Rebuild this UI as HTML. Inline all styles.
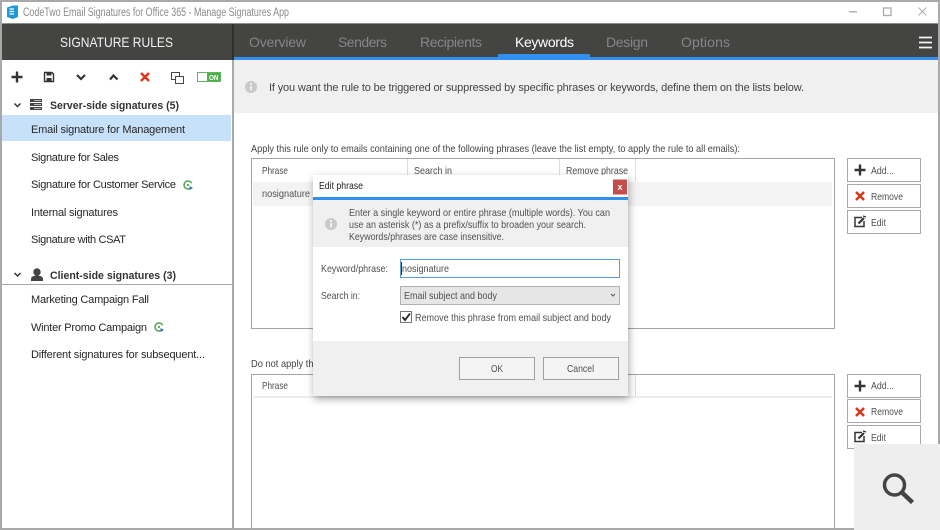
<!DOCTYPE html>
<html><head><meta charset="utf-8"><style>
html,body{margin:0;padding:0;background:#fff;width:940px;height:530px;overflow:hidden}
svg{display:block}
text{font-family:"Liberation Sans",sans-serif;font-size:11px;fill:#3c3c3c}
.s{font-size:10.5px;fill:#505050}
.b{font-weight:bold;fill:#333}
.tab{font-size:14px;fill:#868686}
.li{font-size:11px;fill:#262626}
</style></head><body>
<svg width="940" height="530" viewBox="0 0 940 530" xmlns="http://www.w3.org/2000/svg">
<defs>
<filter id="sh" x="-10%" y="-10%" width="120%" height="125%"><feDropShadow dx="1" dy="3" stdDeviation="4" flood-color="#000" flood-opacity=".35"/></filter>
<g id="add"><path d="M-5.500 0H5.500M0 -5.500V5.500" stroke="#333" stroke-width="2.400" fill="none"/></g>
<g id="x"><path d="M-4 -4L4 4M4 -4L-4 4" stroke="#d9361b" stroke-width="2.500" fill="none"/></g>
<g id="edit"><path d="M2 -4.500H-5V4.500H4V-1" stroke="#333" stroke-width="1.500" fill="none"/><path d="M-1.500 1.500L4 -4" stroke="#333" stroke-width="2.200"/><path d="M3 -6L6 -5" stroke="#333" stroke-width="1.200"/></g>
<g id="sync"><path d="M3.600 -1.800A4 4 0 1 0 1.500 3.700" stroke="#4aa84a" stroke-width="1.500" fill="none"/><circle r="1.100" fill="#4aa84a"/><path d="M1.500 1L5 3L1.500 5Z" fill="#2f6fc0"/></g>
</defs>

<!-- frame -->
<rect width="940" height="530" fill="#a9a9a9"/>
<rect x="2" y="2" width="936" height="526" fill="#fff"/>
<rect x="2" y="23" width="936" height="1" fill="#8d8d8d"/>

<!-- title bar -->
<path d="M7 7.500L13 5.500H18V17L13 19L7 17Z" fill="#1e9ad6"/><path d="M9.500 9H14M9.500 11.500H14M9.500 14H14" stroke="#fff" stroke-width="1.200"/>
<text x="23" y="16" textLength="266" lengthAdjust="spacingAndGlyphs" style="font-size:11.500px;fill:#8a8a8a">CodeTwo Email Signatures for Office 365 - Manage Signatures App</text>
<rect x="849" y="11" width="8" height="1.500" fill="#b0b0b0"/>
<rect x="883.500" y="8" width="7.500" height="7.500" fill="none" stroke="#aaa" stroke-width="1.300"/>
<path d="M918.500 7.500L926.500 15.500M926.500 7.500L918.500 15.500" stroke="#aaa" stroke-width="1" fill="none"/>

<!-- header -->
<rect x="2" y="24" width="936" height="36" fill="#444443"/>
<rect x="232" y="24" width="2" height="36" fill="#2f2f2f"/>
<rect x="234" y="57" width="704" height="3" fill="#3390f0"/>
<rect x="498" y="54" width="92" height="6" fill="#3390f0"/>
<text x="60" y="47" textLength="113" lengthAdjust="spacingAndGlyphs" style="font-size:14px;fill:#f2f2f2">SIGNATURE RULES</text>
<text class="tab" x="249" y="47" textLength="57">Overview</text>
<text class="tab" x="338" y="47" textLength="49">Senders</text>
<text class="tab" x="420" y="47" textLength="62">Recipients</text>
<text class="tab" x="515" y="47" textLength="59" style="fill:#fff">Keywords</text>
<text class="tab" x="606" y="47" textLength="42">Design</text>
<text class="tab" x="681" y="47" textLength="49">Options</text>
<path d="M919 37.500H932M919 42.500H932M919 47.500H932" stroke="#f4f4f4" stroke-width="1.800"/>

<!-- sidebar -->
<rect x="232" y="60" width="2" height="468" fill="#a9a9a9"/>
<use href="#add" x="17" y="77"/>
<path d="M44.500 72.500H52L53.500 74V81.500H44.500Z" fill="none" stroke="#333" stroke-width="1.400"/><rect x="46.500" y="72.500" width="5" height="3" fill="#333"/><rect x="46.500" y="78" width="5" height="3" fill="#333"/>
<path d="M77 75L81 79L85 75" fill="none" stroke="#333" stroke-width="2.200"/>
<path d="M110 79.500L113.500 75.500L117.500 79.500" fill="none" stroke="#333" stroke-width="2.200"/>
<use href="#x" x="145" y="77"/>
<rect x="171.500" y="72.500" width="8" height="7" fill="#fff" stroke="#444" stroke-width="1"/><rect x="175.500" y="76.500" width="8" height="7" fill="#fff" stroke="#444" stroke-width="1"/>
<rect x="197.500" y="72.500" width="23" height="9" fill="#fff" stroke="#5cb85c"/><rect x="207" y="73" width="13" height="8" fill="#4cae4c"/>
<text x="209" y="80" textLength="9.500" lengthAdjust="spacingAndGlyphs" style="font-size:7px;font-weight:bold;fill:#fff">ON</text>

<path d="M14.500 103.500L17.500 106.500L20.500 103.500" fill="none" stroke="#333" stroke-width="1.500"/>
<g fill="#444"><rect x="30" y="99" width="12" height="3"/><rect x="30" y="103" width="12" height="3"/><rect x="30" y="107" width="12" height="3"/></g>
<path d="M34 100.500H41M34 104.500H41M34 108.500H41" stroke="#ddd" stroke-width=".7"/>
<text class="b" x="50" y="109" textLength="129" lengthAdjust="spacingAndGlyphs">Server-side signatures  (5)</text>

<rect x="2" y="115" width="229" height="26" fill="#c8e1fa"/>
<text class="li" x="31" y="133" textLength="154">Email signature for Management</text>
<text class="li" x="31" y="161" textLength="88">Signature for Sales</text>
<text class="li" x="31" y="188" textLength="145">Signature for Customer Service</text>
<use href="#sync" x="188" y="185"/>
<text class="li" x="31" y="216" textLength="87">Internal signatures</text>
<text class="li" x="31" y="243" textLength="95">Signature with CSAT</text>

<path d="M14.500 273L17.500 276L20.500 273" fill="none" stroke="#333" stroke-width="1.500"/>
<circle cx="37" cy="272" r="3.700" fill="#444"/><path d="M31 281V279C31 276.500 34 275.500 37 275.500S43 276.500 43 279V281Z" fill="#444"/>
<text class="b" x="50" y="279" textLength="126" lengthAdjust="spacingAndGlyphs">Client-side signatures  (3)</text>
<rect x="2" y="284" width="230" height="1" fill="#a9a9a9"/>
<text class="li" x="31" y="303" textLength="118">Marketing Campaign Fall</text>
<text class="li" x="31" y="331" textLength="116">Winter Promo Campaign</text>
<use href="#sync" x="159" y="327"/>
<text class="li" x="31" y="358" textLength="174">Different signatures for subsequent...</text>

<!-- info -->
<rect x="234" y="60" width="704" height="53" fill="#f0f0f0"/>
<circle cx="251" cy="87" r="6" fill="#c9c9c9"/><rect x="250" y="86" width="2" height="4.500" fill="#f0f0f0"/><rect x="250" y="83" width="2" height="2" fill="#f0f0f0"/>
<text x="269" y="91" textLength="535" style="font-size:11px;fill:#444">If you want the rule to be triggered or suppressed by specific phrases or keywords, define them on the lists below.</text>

<!-- first list -->
<text x="251" y="152" textLength="489" lengthAdjust="spacingAndGlyphs" style="font-size:10.500px;fill:#444">Apply this rule only to emails containing one of the following phrases (leave the list empty, to apply the rule to all emails):</text>
<rect x="251.500" y="158.500" width="583" height="170" fill="#fff" stroke="#a3a3a8"/>
<rect x="407" y="159" width="1" height="23" fill="#ddd"/><rect x="559" y="159" width="1" height="23" fill="#ddd"/><rect x="635" y="159" width="1" height="23" fill="#ddd"/>
<text class="s" x="262" y="174" textLength="26" lengthAdjust="spacingAndGlyphs">Phrase</text>
<text class="s" x="414" y="174" textLength="38" lengthAdjust="spacingAndGlyphs">Search in</text>
<text class="s" x="566" y="174" textLength="62" lengthAdjust="spacingAndGlyphs">Remove phrase</text>
<rect x="253" y="182" width="579" height="24" fill="#f3f3f3"/>
<text class="s" x="262" y="197" textLength="48" lengthAdjust="spacingAndGlyphs">nosignature</text>

<!-- second list -->
<text x="251" y="367" textLength="172" lengthAdjust="spacingAndGlyphs" style="font-size:10.500px;fill:#444">Do not apply this rule to emails containing</text>
<rect x="251.500" y="374.500" width="583" height="160" fill="#fff" stroke="#a3a3a8"/>
<rect x="254" y="396" width="578" height="2" fill="#ececec"/>
<rect x="407" y="375" width="1" height="21" fill="#ddd"/><rect x="559" y="375" width="1" height="21" fill="#ddd"/><rect x="635" y="375" width="1" height="21" fill="#ddd"/>
<text class="s" x="262" y="389" textLength="26" lengthAdjust="spacingAndGlyphs">Phrase</text>

<!-- side buttons -->
<g fill="#fff" stroke="#a8a8a8">
<rect x="847.500" y="158.500" width="73" height="23"/><rect x="847.500" y="184.500" width="73" height="23"/><rect x="847.500" y="210.500" width="73" height="23"/>
<rect x="847.500" y="374.500" width="73" height="23"/><rect x="847.500" y="399.500" width="73" height="23"/><rect x="847.500" y="425.500" width="73" height="23"/>
</g>
<use href="#add" x="860" y="170"/><text class="s" x="871" y="174" textLength="23" lengthAdjust="spacingAndGlyphs">Add...</text>
<use href="#x" x="860" y="196"/><text class="s" x="871" y="200" textLength="32" lengthAdjust="spacingAndGlyphs">Remove</text>
<use href="#edit" x="860" y="222"/><text class="s" x="871" y="226" textLength="15" lengthAdjust="spacingAndGlyphs">Edit</text>
<use href="#add" x="860" y="386"/><text class="s" x="871" y="389" textLength="23" lengthAdjust="spacingAndGlyphs">Add...</text>
<use href="#x" x="860" y="412"/><text class="s" x="871" y="415" textLength="32" lengthAdjust="spacingAndGlyphs">Remove</text>
<use href="#edit" x="860" y="437"/><text class="s" x="871" y="441" textLength="15" lengthAdjust="spacingAndGlyphs">Edit</text>

<!-- search tile -->
<rect x="854" y="444" width="86" height="86" fill="#eeeeee"/>
<circle cx="894.500" cy="485" r="10" fill="none" stroke="#444" stroke-width="3.500"/>
<path d="M902 492.500L912.500 502.500" stroke="#444" stroke-width="4.500"/>

<!-- dialog -->
<rect x="313" y="175" width="315" height="221" fill="#fff" filter="url(#sh)"/>
<text x="319" y="189" textLength="44" lengthAdjust="spacingAndGlyphs" style="font-size:10.500px;fill:#222">Edit phrase</text>
<rect x="613" y="179.500" width="14" height="15" fill="#c84b4b"/>
<text x="617.500" y="190" style="font-size:9px;font-weight:bold;fill:#fff">x</text>
<rect x="313" y="197" width="315" height="3" fill="#2f8fec"/>
<rect x="313" y="200" width="315" height="47" fill="#f0f0f0"/>
<circle cx="331" cy="224" r="6" fill="#c9c9c9"/><rect x="330" y="223" width="2" height="4.500" fill="#f0f0f0"/><rect x="330" y="220" width="2" height="2" fill="#f0f0f0"/>
<text class="s" x="349" y="216" textLength="261" lengthAdjust="spacingAndGlyphs">Enter a single keyword or entire phrase (multiple words). You can</text>
<text class="s" x="349" y="228" textLength="237" lengthAdjust="spacingAndGlyphs">use an asterisk (*) as a prefix/suffix to broaden your search.</text>
<text class="s" x="349" y="240" textLength="155" lengthAdjust="spacingAndGlyphs">Keywords/phrases are case insensitive.</text>

<text class="s" x="321" y="272" textLength="67" lengthAdjust="spacingAndGlyphs">Keyword/phrase:</text>
<rect x="400.500" y="259.500" width="219" height="18" fill="#fff" stroke="#5a9bd6"/>
<rect x="401" y="262" width="1" height="13" fill="#333"/>
<text class="s" x="402" y="272" textLength="47" lengthAdjust="spacingAndGlyphs">nosignature</text>

<text class="s" x="321" y="299" textLength="39" lengthAdjust="spacingAndGlyphs">Search in:</text>
<rect x="400.500" y="286.500" width="219" height="18" fill="#e6e6e6" stroke="#b0b0b0"/>
<text class="s" x="404" y="299" textLength="93" lengthAdjust="spacingAndGlyphs">Email subject and body</text>
<path d="M611 294L613 296L615 294" fill="none" stroke="#555" stroke-width="1"/>

<rect x="400.500" y="311.500" width="11" height="11" fill="#fff" stroke="#777"/>
<path d="M402.500 317L405 320L410 313.500" fill="none" stroke="#222" stroke-width="1.800"/>
<text class="s" x="415" y="321" textLength="196" lengthAdjust="spacingAndGlyphs">Remove this phrase from email subject and body</text>

<rect x="313" y="341" width="315" height="55" fill="#f0f0f0"/>
<rect x="459.500" y="357.500" width="75" height="22" fill="#f4f4f4" stroke="#a0a0a0"/>
<rect x="543.500" y="357.500" width="75" height="22" fill="#f4f4f4" stroke="#a0a0a0"/>
<text class="s" x="491" y="372" textLength="12" lengthAdjust="spacingAndGlyphs">OK</text>
<text class="s" x="567" y="372" textLength="27" lengthAdjust="spacingAndGlyphs">Cancel</text>

<!-- bottom frame over content -->
<rect x="0" y="528" width="854" height="2" fill="#a9a9a9"/>
</svg>
</body></html>
